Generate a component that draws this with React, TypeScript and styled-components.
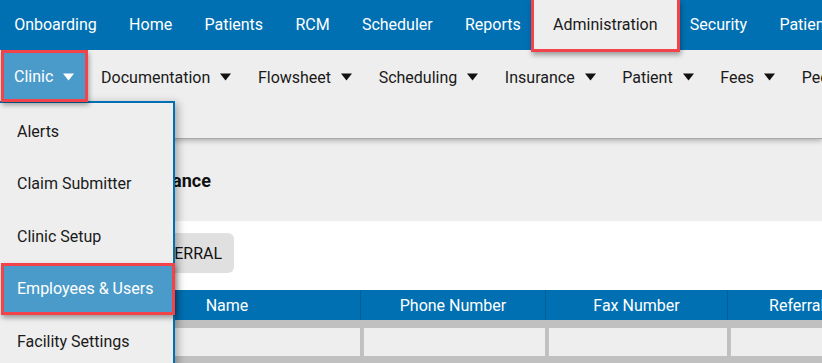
import styled, { createGlobalStyle } from "styled-components";

const GlobalStyle = createGlobalStyle`
    html, body {
        margin: 0;
        padding: 0;
        background: #eeeeee;
        font-family: Roboto, "Liberation Sans", Arial, sans-serif;
        overflow: hidden;
    }
`;

const red = "#f2434b";
const blue = "#0070b2";
const lightBlue = "#4b9bca";

const Page = styled.div`
    width: 822px;
    height: 363px;
    position: relative;
    overflow: hidden;
    background: #eeeeee;
`;

const TopNav = styled.nav`
    position: relative;
    z-index: 4;
    display: flex;
    height: 50px;
    margin-left: -2px;
    background: ${blue};
    white-space: nowrap;
`;

const TopItem = styled.div<{ $active?: boolean }>`
    display: flex;
    align-items: center;
    box-sizing: border-box;
    padding: 0 16.15px;
    height: 50px;
    padding-bottom: 1px;
    font-size: 16px;
    color: #ffffff;

    ${(p) =>
        p.$active &&
        `
        height: 52px;
        margin: 0 -6px -2px;
        padding: 0 19.15px;
        border: 3px solid ${red};
        border-top: none;
        background: #eeeeee;
        color: #1a1a1a;
        box-shadow: 1px 3px 5px rgba(0, 0, 0, 0.35);
    `}
`;

const SubNav = styled.div`
    position: relative;
    z-index: 3;
    height: 88px;
    background: #eeeeee;
    border-bottom: 1px solid #a8a8a8;
    box-shadow: 0 2px 5px rgba(0, 0, 0, 0.25);
`;

const SubRow = styled.div`
    display: flex;
    height: 52px;
    margin-left: 0.5px;
    white-space: nowrap;
`;

const SubItem = styled.div<{ $active?: boolean }>`
    position: relative;
    z-index: 2;
    display: flex;
    align-items: center;
    gap: 10px;
    box-sizing: border-box;
    height: 52px;
    padding: 2px 13.3px 0;
    font-size: 16px;
    color: #1a1a1a;

    ${(p) =>
        p.$active &&
        `
        padding: 1px 10.5px 0;
        border: 3px solid ${red};
        background: ${lightBlue};
        color: #ffffff;
        box-shadow: 1px 3px 5px rgba(0, 0, 0, 0.35);
    `}
`;

const Caret = ({ color }: { color: string }) => (
    <svg width="11" height="8" viewBox="0 0 11 8">
        <path d="M0 0.5 H11 L5.5 7.5 Z" fill={color} />
    </svg>
);

const Dropdown = styled.div`
    position: absolute;
    z-index: 1;
    top: 51px;
    left: -2px;
    width: 177px;
    height: 300px;
    box-sizing: border-box;
    padding-top: 2px;
    background: #eeeeee;
    border: 2px solid ${blue};
    box-shadow: 3px 2px 8px rgba(0, 0, 0, 0.3);
`;

const DropItem = styled.div<{ $active?: boolean }>`
    display: flex;
    align-items: center;
    box-sizing: border-box;
    height: 52.5px;
    padding-left: 17px;
    font-size: 16px;
    color: #1a1a1a;
    white-space: nowrap;

    ${(p) =>
        p.$active &&
        `
        margin: 0 -2px 0 1px;
        padding-left: 13px;
        border: 3px solid ${red};
        background: ${lightBlue};
        color: #ffffff;
        box-shadow: 1px 3px 5px rgba(0, 0, 0, 0.35);
    `}
`;

const Content = styled.main`
    padding-top: 30px;
`;

const Title = styled.h1`
    margin: 0 0 28px 37px;
    height: 24px;
    line-height: 24px;
    font-size: 18px;
    font-weight: 700;
    color: #111111;
`;

const Panel = styled.section`
    background: #ffffff;
    padding: 12px 0 0 94px;
`;

const Button = styled.button`
    display: block;
    height: 40px;
    margin: 0 0 17px 5px;
    padding: 0 12px;
    border: none;
    border-radius: 6px;
    background: #e0e0e0;
    font-family: inherit;
    font-size: 16px;
    color: #111111;
`;

const columns = "266px 185px 182px 192px 200px";

const HeadRow = styled.div`
    display: grid;
    grid-template-columns: ${columns};
    height: 30px;
    background: ${blue};
`;

const HeadCell = styled.div`
    display: flex;
    align-items: center;
    justify-content: center;
    white-space: nowrap;
    font-size: 16px;
    color: #ffffff;
    & + & {
        border-left: 1px solid #005f98;
    }
`;

const FilterRow = styled.div`
    display: grid;
    grid-template-columns: ${columns};
    padding: 8px 0 10px;
    background: #c0c0c0;
`;

const FilterCell = styled.div`
    height: 28px;
    background: #eeeeee;
    & + & {
        margin-left: 3px;
        border-left: 1px solid #c4c4c4;
    }
`;

const topLinks = ["Onboarding", "Home", "Patients", "RCM", "Scheduler", "Reports", "Administration", "Security", "Patient Portal"];
const subLinks = ["Clinic", "Documentation", "Flowsheet", "Scheduling", "Insurance", "Patient", "Fees", "Pediatric"];
const clinicLinks = ["Alerts", "Claim Submitter", "Clinic Setup", "Employees & Users", "Facility Settings"];
const headers = ["Name", "Phone Number", "Fax Number", "Referral Source", "Email"];

const App = () => (
    <Page>
        <GlobalStyle />
        <TopNav>
            {topLinks.map((l) => (
                <TopItem key={l} $active={l === "Administration"}>
                    {l}
                </TopItem>
            ))}
        </TopNav>
        <SubNav>
            <SubRow>
                {subLinks.map((l) => (
                    <SubItem key={l} $active={l === "Clinic"}>
                        {l}
                        <Caret color={l === "Clinic" ? "#ffffff" : "#111111"} />
                    </SubItem>
                ))}
            </SubRow>
            <Dropdown>
                {clinicLinks.map((l) => (
                    <DropItem key={l} $active={l === "Employees & Users"}>
                        {l}
                    </DropItem>
                ))}
            </Dropdown>
        </SubNav>
        <Content>
            <Title>Referral Maintenance</Title>
            <Panel>
                <Button type="button">ADD REFERRAL</Button>
                <HeadRow>
                    {headers.map((h) => (
                        <HeadCell key={h}>{h}</HeadCell>
                    ))}
                </HeadRow>
                <FilterRow>
                    {headers.map((h) => (
                        <FilterCell key={h} />
                    ))}
                </FilterRow>
            </Panel>
        </Content>
    </Page>
);

export default App;
